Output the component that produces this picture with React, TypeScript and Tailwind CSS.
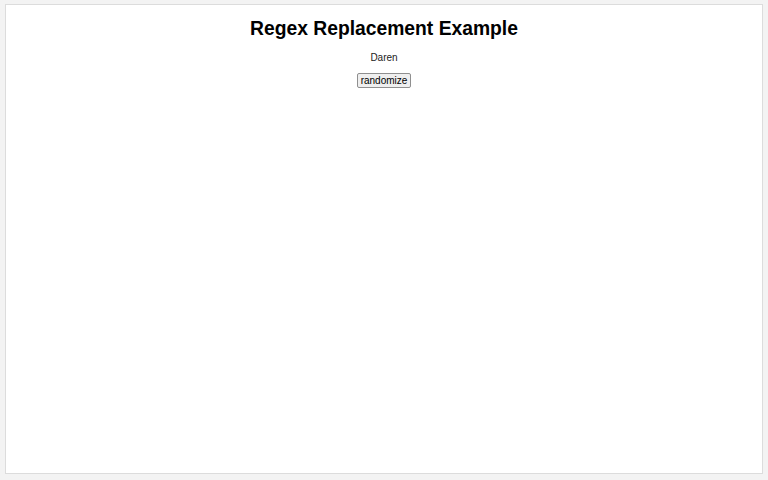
import React, { useState } from 'react';

const names = ['Daren', 'Darren', 'Karen', 'Aaron', 'Sharon'];

const App: React.FC = () => {
  const [name, setName] = useState<string>('Daren');

  return (
    <div className="min-h-[480px] bg-[#f3f3f3] pt-[4px] pb-[6px] pl-[5px] pr-[5px] font-['Liberation_Sans',Arial,sans-serif]">
      <div className="h-[470px] bg-white border border-[#dcdcdc] flex flex-col items-center">
        <h1 className="mt-[10px] text-[19.3px] leading-[28px] font-bold text-black">Regex Replacement Example</h1>
        <p className="mt-[9px] text-[10px] leading-[12px] text-[#222]">{name}</p>
        <button
          onClick={() => setName(names[Math.floor(Math.random() * names.length)])}
          className="mt-[9px] h-[15px] px-[3px] text-[10px] leading-[12px] text-black bg-[#efefef] border border-[#8f8f8f] rounded-[2px]"
        >
          randomize
        </button>
      </div>
    </div>
  );
};

export default App;
